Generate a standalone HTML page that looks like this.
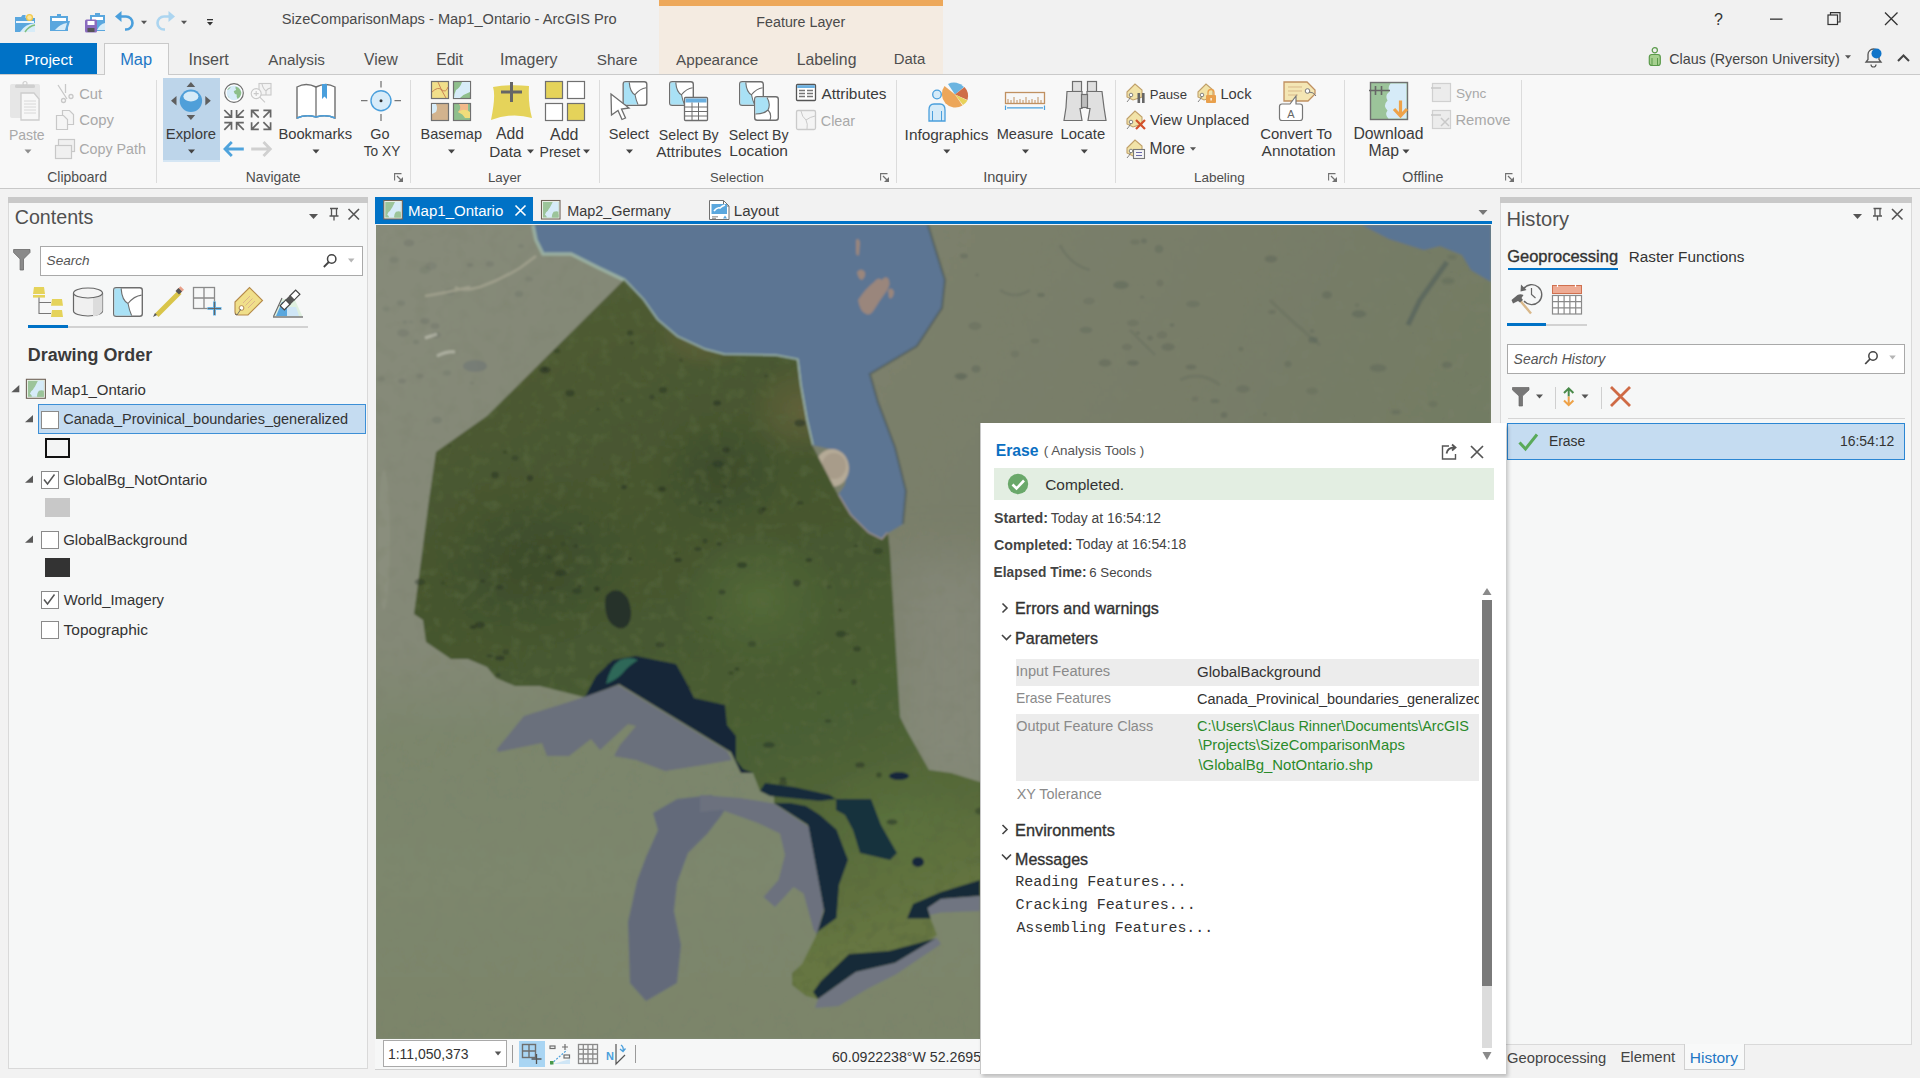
<!DOCTYPE html>
<html><head><meta charset="utf-8">
<style>
*{margin:0;padding:0;box-sizing:border-box}
html,body{width:1920px;height:1078px;overflow:hidden;background:#f2f2f2;font-family:"Liberation Sans",sans-serif;color:#333;position:relative}
.a{position:absolute}
.t{position:absolute;white-space:nowrap;line-height:1}
svg{position:absolute;overflow:visible}
</style></head><body>
<div class="a" style="left:0px;top:0px;width:1920px;height:75px;background:#f1f1f1"></div>
<div class="a" style="left:659px;top:0px;width:284px;height:75px;background:#f4ebe1"></div>
<div class="a" style="left:659px;top:0px;width:284px;height:6px;background:#eda85a"></div>
<div class="t" style="left:281.84px;top:12.41px;font-size:14.63px;color:#4a4a4a;font-family:'Liberation Sans',sans-serif;">SizeComparisonMaps - Map1_Ontario - ArcGIS Pro</div>
<div class="t" style="left:756.36px;top:14.82px;font-size:14.27px;color:#4a4a4a;font-family:'Liberation Sans',sans-serif;">Feature Layer</div>
<div class="a" style="left:0px;top:74px;width:1920px;height:1px;background:#cacaca"></div>
<div class="a" style="left:0px;top:43px;width:97px;height:31px;background:#0072c6"></div>
<div class="a" style="left:104px;top:43px;width:65px;height:32px;background:#f8f8f8;border:1px solid #c9c9c9;border-bottom:none"></div>
<div class="t" style="left:24.26px;top:51.85px;font-size:15.54px;color:#ffffff;font-family:'Liberation Sans',sans-serif;">Project</div>
<div class="t" style="left:120.18px;top:51.08px;font-size:16.44px;color:#1f77c5;font-family:'Liberation Sans',sans-serif;">Map</div>
<div class="t" style="left:188.55px;top:51.34px;font-size:16.13px;color:#4f4f4f;font-family:'Liberation Sans',sans-serif;">Insert</div>
<div class="t" style="left:268.30px;top:52.11px;font-size:15.23px;color:#4f4f4f;font-family:'Liberation Sans',sans-serif;">Analysis</div>
<div class="t" style="left:364.12px;top:51.74px;font-size:15.66px;color:#4f4f4f;font-family:'Liberation Sans',sans-serif;">View</div>
<div class="t" style="left:436.25px;top:51.80px;font-size:15.60px;color:#4f4f4f;font-family:'Liberation Sans',sans-serif;">Edit</div>
<div class="t" style="left:500.07px;top:51.53px;font-size:15.91px;color:#4f4f4f;font-family:'Liberation Sans',sans-serif;">Imagery</div>
<div class="t" style="left:596.81px;top:52.05px;font-size:15.30px;color:#4f4f4f;font-family:'Liberation Sans',sans-serif;">Share</div>
<div class="t" style="left:676.00px;top:52.09px;font-size:15.25px;color:#4f4f4f;font-family:'Liberation Sans',sans-serif;">Appearance</div>
<div class="t" style="left:796.74px;top:51.63px;font-size:15.79px;color:#4f4f4f;font-family:'Liberation Sans',sans-serif;">Labeling</div>
<div class="t" style="left:893.81px;top:52.37px;font-size:14.93px;color:#4f4f4f;font-family:'Liberation Sans',sans-serif;">Data</div>
<div class="t" style="left:1669.28px;top:51.62px;font-size:14.33px;color:#444;font-family:'Liberation Sans',sans-serif;">Claus (Ryerson University)</div>
<div class="a" style="left:0px;top:75px;width:1920px;height:113px;background:#f8f8f8"></div>
<div class="a" style="left:0px;top:188px;width:1920px;height:1px;background:#c8c8c8"></div>
<div class="a" style="left:156.0px;top:80px;width:1px;height:103px;background:#dcdcdc"></div>
<div class="a" style="left:409.8px;top:80px;width:1px;height:103px;background:#dcdcdc"></div>
<div class="a" style="left:598.9px;top:80px;width:1px;height:103px;background:#dcdcdc"></div>
<div class="a" style="left:896.0px;top:80px;width:1px;height:103px;background:#dcdcdc"></div>
<div class="a" style="left:1114.8px;top:80px;width:1px;height:103px;background:#dcdcdc"></div>
<div class="a" style="left:1344.1px;top:80px;width:1px;height:103px;background:#dcdcdc"></div>
<div class="a" style="left:1521.2px;top:80px;width:1px;height:103px;background:#dcdcdc"></div>
<div class="a" style="left:163px;top:78px;width:57px;height:84px;background:#bdd5ea"></div>
<div class="a" style="left:163px;top:160px;width:57px;height:2px;background:#d5e6f4"></div>
<div class="t" style="left:8.88px;top:127.76px;font-size:13.99px;color:#a9a9a9;font-family:'Liberation Sans',sans-serif;">Paste</div>
<div class="t" style="left:79.27px;top:86.58px;font-size:14.67px;color:#a9a9a9;font-family:'Liberation Sans',sans-serif;">Cut</div>
<div class="t" style="left:79.26px;top:113.40px;font-size:14.88px;color:#a9a9a9;font-family:'Liberation Sans',sans-serif;">Copy</div>
<div class="t" style="left:79.29px;top:142.42px;font-size:14.27px;color:#a9a9a9;font-family:'Liberation Sans',sans-serif;">Copy Path</div>
<div class="t" style="left:47.30px;top:170.51px;font-size:13.93px;color:#4d4d4d;font-family:'Liberation Sans',sans-serif;">Clipboard</div>
<div class="t" style="left:165.81px;top:127.03px;font-size:14.85px;color:#3b3b3b;font-family:'Liberation Sans',sans-serif;">Explore</div>
<div class="t" style="left:278.42px;top:127.12px;font-size:14.74px;color:#3b3b3b;font-family:'Liberation Sans',sans-serif;">Bookmarks</div>
<div class="t" style="left:370.28px;top:127.36px;font-size:14.46px;color:#3b3b3b;font-family:'Liberation Sans',sans-serif;">Go</div>
<div class="t" style="left:363.73px;top:144.99px;font-size:13.71px;color:#3b3b3b;font-family:'Liberation Sans',sans-serif;">To XY</div>
<div class="t" style="left:245.69px;top:170.53px;font-size:13.90px;color:#4d4d4d;font-family:'Liberation Sans',sans-serif;">Navigate</div>
<div class="t" style="left:420.53px;top:127.27px;font-size:14.57px;color:#3b3b3b;font-family:'Liberation Sans',sans-serif;">Basemap</div>
<div class="t" style="left:496.00px;top:126.27px;font-size:15.74px;color:#3b3b3b;font-family:'Liberation Sans',sans-serif;">Add</div>
<div class="t" style="left:489.28px;top:143.67px;font-size:15.27px;color:#3b3b3b;font-family:'Liberation Sans',sans-serif;">Data</div>
<div class="t" style="left:550.00px;top:126.03px;font-size:16.03px;color:#3b3b3b;font-family:'Liberation Sans',sans-serif;">Add</div>
<div class="t" style="left:539.58px;top:144.72px;font-size:14.04px;color:#3b3b3b;font-family:'Liberation Sans',sans-serif;">Preset</div>
<div class="t" style="left:487.94px;top:171.04px;font-size:13.31px;color:#4d4d4d;font-family:'Liberation Sans',sans-serif;">Layer</div>
<div class="t" style="left:608.75px;top:127.33px;font-size:14.50px;color:#3b3b3b;font-family:'Liberation Sans',sans-serif;">Select</div>
<div class="t" style="left:658.86px;top:127.61px;font-size:14.16px;color:#3b3b3b;font-family:'Liberation Sans',sans-serif;">Select By</div>
<div class="t" style="left:656.30px;top:143.55px;font-size:15.42px;color:#3b3b3b;font-family:'Liberation Sans',sans-serif;">Attributes</div>
<div class="t" style="left:728.76px;top:127.61px;font-size:14.16px;color:#3b3b3b;font-family:'Liberation Sans',sans-serif;">Select By</div>
<div class="t" style="left:729.26px;top:143.44px;font-size:15.54px;color:#3b3b3b;font-family:'Liberation Sans',sans-serif;">Location</div>
<div class="t" style="left:710.11px;top:171.25px;font-size:13.06px;color:#4d4d4d;font-family:'Liberation Sans',sans-serif;">Selection</div>
<div class="t" style="left:821.50px;top:85.97px;font-size:15.39px;color:#3b3b3b;font-family:'Liberation Sans',sans-serif;">Attributes</div>
<div class="t" style="left:820.78px;top:113.81px;font-size:14.40px;color:#a9a9a9;font-family:'Liberation Sans',sans-serif;">Clear</div>
<div class="t" style="left:904.61px;top:126.56px;font-size:15.40px;color:#3b3b3b;font-family:'Liberation Sans',sans-serif;">Infographics</div>
<div class="t" style="left:996.63px;top:127.26px;font-size:14.58px;color:#3b3b3b;font-family:'Liberation Sans',sans-serif;">Measure</div>
<div class="t" style="left:1060.61px;top:127.03px;font-size:14.85px;color:#3b3b3b;font-family:'Liberation Sans',sans-serif;">Locate</div>
<div class="t" style="left:983.19px;top:169.94px;font-size:14.60px;color:#4d4d4d;font-family:'Liberation Sans',sans-serif;">Inquiry</div>
<div class="t" style="left:1149.65px;top:87.85px;font-size:13.17px;color:#3b3b3b;font-family:'Liberation Sans',sans-serif;">Pause</div>
<div class="t" style="left:1220.42px;top:86.53px;font-size:14.73px;color:#3b3b3b;font-family:'Liberation Sans',sans-serif;">Lock</div>
<div class="t" style="left:1149.93px;top:113.05px;font-size:14.94px;color:#3b3b3b;font-family:'Liberation Sans',sans-serif;">View Unplaced</div>
<div class="t" style="left:1149.45px;top:141.27px;font-size:15.63px;color:#3b3b3b;font-family:'Liberation Sans',sans-serif;">More</div>
<div class="t" style="left:1260.25px;top:126.97px;font-size:14.92px;color:#3b3b3b;font-family:'Liberation Sans',sans-serif;">Convert To</div>
<div class="t" style="left:1261.60px;top:143.48px;font-size:15.50px;color:#3b3b3b;font-family:'Liberation Sans',sans-serif;">Annotation</div>
<div class="t" style="left:1193.92px;top:170.89px;font-size:13.48px;color:#4d4d4d;font-family:'Liberation Sans',sans-serif;">Labeling</div>
<div class="t" style="left:1353.44px;top:126.25px;font-size:15.77px;color:#3b3b3b;font-family:'Liberation Sans',sans-serif;">Download</div>
<div class="t" style="left:1368.44px;top:143.24px;font-size:15.78px;color:#3b3b3b;font-family:'Liberation Sans',sans-serif;">Map</div>
<div class="t" style="left:1402.36px;top:170.21px;font-size:14.28px;color:#4d4d4d;font-family:'Liberation Sans',sans-serif;">Offline</div>
<div class="t" style="left:1455.99px;top:87.45px;font-size:13.64px;color:#a9a9a9;font-family:'Liberation Sans',sans-serif;">Sync</div>
<div class="t" style="left:1455.41px;top:113.14px;font-size:14.83px;color:#a9a9a9;font-family:'Liberation Sans',sans-serif;">Remove</div>
<div class="a" style="left:8px;top:197px;width:360px;height:872px;background:#f6f7f7;border:1px solid #d9d9d9;border-top:none"></div>
<div class="a" style="left:8px;top:197px;width:360px;height:6px;background:#c9c9c9"></div>
<div class="t" style="left:14.72px;top:208.35px;font-size:19.67px;color:#505050;font-family:'Liberation Sans',sans-serif;">Contents</div>
<div class="a" style="left:40px;top:246px;width:323px;height:30px;background:#fff;border:1px solid #a9a9a9"></div>
<div class="t" style="left:46.59px;top:254.49px;font-size:13.59px;color:#555;font-family:'Liberation Sans',sans-serif;font-style:italic;">Search</div>
<div class="a" style="left:28px;top:325px;width:40px;height:3px;background:#0072c6"></div>
<div class="a" style="left:68px;top:326px;width:240px;height:2px;background:#d2d2d2"></div>
<div class="t" style="left:27.84px;top:346.83px;font-size:17.92px;color:#3a3a3a;font-family:'Liberation Sans',sans-serif;font-weight:bold;">Drawing Order</div>
<div class="a" style="left:38px;top:404px;width:328px;height:30px;background:#c5dcf1;border:1px solid #3c8fd6"></div>
<div class="t" style="left:51.10px;top:382.32px;font-size:14.98px;color:#333;font-family:'Liberation Sans',sans-serif;">Map1_Ontario</div>
<div class="t" style="left:63.17px;top:412.11px;font-size:14.52px;color:#333;font-family:'Liberation Sans',sans-serif;">Canada_Provinical_boundaries_generalized</div>
<div class="t" style="left:63.14px;top:472.16px;font-size:15.17px;color:#333;font-family:'Liberation Sans',sans-serif;">GlobalBg_NotOntario</div>
<div class="t" style="left:63.14px;top:532.21px;font-size:15.10px;color:#333;font-family:'Liberation Sans',sans-serif;">GlobalBackground</div>
<div class="t" style="left:63.83px;top:592.76px;font-size:14.82px;color:#333;font-family:'Liberation Sans',sans-serif;">World_Imagery</div>
<div class="t" style="left:63.59px;top:621.89px;font-size:15.49px;color:#333;font-family:'Liberation Sans',sans-serif;">Topographic</div>
<div class="a" style="left:40.5px;top:410.6px;width:18px;height:18px;background:#fff;border:1px solid #8a8a8a"></div>
<div class="a" style="left:40.5px;top:471px;width:18px;height:18px;background:#fff;border:1px solid #8a8a8a"></div>
<div class="a" style="left:40.5px;top:530.8px;width:18px;height:18px;background:#fff;border:1px solid #8a8a8a"></div>
<div class="a" style="left:40.5px;top:591px;width:18px;height:18px;background:#fff;border:1px solid #8a8a8a"></div>
<div class="a" style="left:40.5px;top:621px;width:18px;height:18px;background:#fff;border:1px solid #8a8a8a"></div>
<div class="a" style="left:45px;top:438px;width:25px;height:20px;background:#f3f4f4;border:2.5px solid #111"></div>
<div class="a" style="left:45px;top:498px;width:24.5px;height:19px;background:#c8c8c8"></div>
<div class="a" style="left:45px;top:558px;width:24.5px;height:19px;background:#333"></div>
<div class="a" style="left:375px;top:197px;width:158px;height:25px;background:#0072c6"></div>
<div class="a" style="left:375px;top:221px;width:1117px;height:3px;background:#0072c6"></div>
<div class="t" style="left:408.10px;top:203.28px;font-size:15.03px;color:#ffffff;font-family:'Liberation Sans',sans-serif;">Map1_Ontario</div>
<div class="t" style="left:567.14px;top:203.77px;font-size:14.44px;color:#3a3a3a;font-family:'Liberation Sans',sans-serif;">Map2_Germany</div>
<div class="t" style="left:733.79px;top:203.22px;font-size:15.09px;color:#3a3a3a;font-family:'Liberation Sans',sans-serif;">Layout</div>
<div class="a" id="map" style="left:376px;top:225px;width:1115px;height:814px;background:#838a77;overflow:hidden"><svg width="1115" height="814" viewBox="376 225 1115 814" style="left:0;top:0">
<defs>
<linearGradient id="gon" x1="0" y1="0" x2="0.35" y2="1">
<stop offset="0" stop-color="#5f6240"/><stop offset="0.18" stop-color="#4f5b34"/><stop offset="0.45" stop-color="#45552e"/><stop offset="0.75" stop-color="#4a5f34"/><stop offset="0.9" stop-color="#596b3b"/><stop offset="1" stop-color="#667642"/>
</linearGradient>
<linearGradient id="gbg" x1="0" y1="0" x2="1" y2="0.4">
<stop offset="0" stop-color="#878b7a"/><stop offset="0.3" stop-color="#838876"/><stop offset="0.45" stop-color="#7b806c"/><stop offset="0.7" stop-color="#787d68"/><stop offset="1" stop-color="#717b62"/>
</linearGradient>
<linearGradient id="gsouth" x1="0" y1="0" x2="0" y2="1">
<stop offset="0" stop-color="#7f886f" stop-opacity="0"/><stop offset="0.25" stop-color="#7b866c" stop-opacity="1"/><stop offset="0.6" stop-color="#7d876d" stop-opacity="1"/><stop offset="1" stop-color="#7c856b" stop-opacity="1"/>
</linearGradient>
<radialGradient id="brown" cx="0.5" cy="0.5" r="0.5">
<stop offset="0" stop-color="#7a6a45" stop-opacity="0.5"/><stop offset="1" stop-color="#7a6a45" stop-opacity="0"/>
</radialGradient>
<radialGradient id="dark" cx="0.5" cy="0.5" r="0.5"><stop offset="0" stop-color="#34432a" stop-opacity="0.5"/><stop offset="1" stop-color="#34432a" stop-opacity="0"/></radialGradient>
<radialGradient id="lgreen" cx="0.5" cy="0.5" r="0.5"><stop offset="0" stop-color="#5f7a40" stop-opacity="0.5"/><stop offset="1" stop-color="#5f7a40" stop-opacity="0"/></radialGradient>
<clipPath id="ontclip"><polygon id="ontpoly" points="624,280 643,300 657,320 677,337 705,350 724,355 776,356 797,360 800,385 806,419 812,445 838,495 850,515 868,533 882,540 888,533 890,552 900,717 907,731 929,770 951,773 980,782 1000,782 1000,896 980,896 941,899 927.6,908 930.6,918.6 937,935 895,963 856,972 831,990 818,999 806,996 792,985 792,973 802,964 816,936 824,911 808,825 774,803 774,795 760,791 753,773 741,773 731,752 619,684 588,698 576,695 540,686 515,686 496,678 487,667 468,659 451,659 426,642 423,620 414,614 429,500 436,452 487,416"/></clipPath>
<filter id="tex" x="376" y="225" width="1115" height="814" filterUnits="userSpaceOnUse">
<feTurbulence type="fractalNoise" baseFrequency="0.07" numOctaves="3" seed="7" result="n"/>
<feColorMatrix in="n" type="matrix" values="0 0 0 0 0.2  0 0 0 0 0.22  0 0 0 0 0.15  0 0 0 -0.9 0.45" result="spots"/>
<feComposite in="spots" in2="SourceGraphic" operator="in" result="s2"/>
<feMerge><feMergeNode in="SourceGraphic"/><feMergeNode in="s2"/></feMerge>
</filter>
<filter id="tex2" x="376" y="225" width="1115" height="814" filterUnits="userSpaceOnUse">
<feTurbulence type="fractalNoise" baseFrequency="0.09" numOctaves="3" seed="11" result="n"/>
<feColorMatrix in="n" type="matrix" values="0 0 0 0 0.1  0 0 0 0 0.14  0 0 0 0 0.05  0 0 0 -1.6 0.8" result="spots"/>
<feComposite in="spots" in2="SourceGraphic" operator="in" result="s2"/>
<feColorMatrix in="n" type="matrix" values="0 0 0 0 0.42  0 0 0 0 0.44  0 0 0 0 0.25  0 0 0 0.9 -0.5" result="light"/>
<feComposite in="light" in2="SourceGraphic" operator="in" result="l2"/>
<feMerge><feMergeNode in="SourceGraphic"/><feMergeNode in="s2"/></feMerge>
</filter>
<filter id="bigblur" x="376" y="225" width="1115" height="814" filterUnits="userSpaceOnUse"><feGaussianBlur stdDeviation="25"/></filter>
<filter id="soft" x="376" y="225" width="1115" height="814" filterUnits="userSpaceOnUse"><feGaussianBlur stdDeviation="0.9"/></filter>
</defs>
<g filter="url(#soft)">
<g filter="url(#tex)">
<rect x="376" y="225" width="1115" height="814" fill="url(#gbg)"/>
<rect x="376" y="640" width="620" height="399" fill="url(#gsouth)"/>
<rect x="890" y="560" width="120" height="240" fill="#86897a" opacity="0.85" filter="url(#bigblur)"/>
<ellipse cx="384" cy="540" rx="6" ry="70" fill="#999c8a" opacity="0.3"/>
</g>
<g id="spots"><ellipse cx="1224" cy="415" rx="3.4" ry="3.0" fill="#505a52" opacity="0.32"/><ellipse cx="1159" cy="249" rx="4.1" ry="3.9" fill="#505a52" opacity="0.28"/><ellipse cx="1195" cy="399" rx="3.1" ry="2.5" fill="#505a52" opacity="0.23"/><ellipse cx="1035" cy="341" rx="4.5" ry="2.4" fill="#505a52" opacity="0.22"/><ellipse cx="1121" cy="285" rx="7.9" ry="4.0" fill="#505a52" opacity="0.33"/><ellipse cx="1272" cy="312" rx="3.7" ry="1.9" fill="#505a52" opacity="0.27"/><ellipse cx="976" cy="369" rx="4.6" ry="3.8" fill="#505a52" opacity="0.32"/><ellipse cx="1105" cy="363" rx="6.4" ry="3.7" fill="#505a52" opacity="0.32"/><ellipse cx="1135" cy="242" rx="4.7" ry="2.8" fill="#505a52" opacity="0.22"/><ellipse cx="1142" cy="297" rx="2.2" ry="1.6" fill="#505a52" opacity="0.25"/><ellipse cx="1191" cy="367" rx="5.4" ry="2.5" fill="#505a52" opacity="0.32"/><ellipse cx="1447" cy="365" rx="5.2" ry="3.2" fill="#505a52" opacity="0.32"/><ellipse cx="1127" cy="347" rx="5.2" ry="3.2" fill="#505a52" opacity="0.23"/><ellipse cx="964" cy="256" rx="4.1" ry="2.4" fill="#505a52" opacity="0.32"/><ellipse cx="1327" cy="295" rx="5.1" ry="3.8" fill="#505a52" opacity="0.31"/><ellipse cx="961" cy="376" rx="6.8" ry="3.2" fill="#505a52" opacity="0.34"/><ellipse cx="1312" cy="391" rx="5.8" ry="3.3" fill="#505a52" opacity="0.22"/><ellipse cx="1215" cy="401" rx="4.6" ry="2.1" fill="#505a52" opacity="0.28"/><ellipse cx="1144" cy="241" rx="3.0" ry="2.5" fill="#505a52" opacity="0.30"/><ellipse cx="1433" cy="404" rx="4.4" ry="3.0" fill="#505a52" opacity="0.20"/><ellipse cx="1313" cy="340" rx="4.8" ry="3.3" fill="#505a52" opacity="0.34"/><ellipse cx="1041" cy="295" rx="3.8" ry="2.2" fill="#505a52" opacity="0.34"/><ellipse cx="1015" cy="354" rx="4.3" ry="3.4" fill="#505a52" opacity="0.19"/><ellipse cx="1243" cy="389" rx="6.9" ry="3.7" fill="#505a52" opacity="0.26"/><ellipse cx="1162" cy="335" rx="5.1" ry="3.8" fill="#505a52" opacity="0.23"/><ellipse cx="1265" cy="414" rx="2.0" ry="2.0" fill="#505a52" opacity="0.20"/><ellipse cx="1241" cy="349" rx="2.4" ry="2.0" fill="#505a52" opacity="0.29"/><ellipse cx="1288" cy="364" rx="3.6" ry="3.3" fill="#505a52" opacity="0.27"/><ellipse cx="1396" cy="412" rx="4.6" ry="2.3" fill="#505a52" opacity="0.29"/><ellipse cx="1448" cy="281" rx="6.5" ry="3.2" fill="#505a52" opacity="0.26"/><ellipse cx="977" cy="275" rx="2.1" ry="1.9" fill="#505a52" opacity="0.21"/><ellipse cx="1271" cy="259" rx="6.4" ry="3.4" fill="#505a52" opacity="0.32"/><ellipse cx="1378" cy="368" rx="8.2" ry="3.8" fill="#505a52" opacity="0.29"/><ellipse cx="1470" cy="259" rx="1.9" ry="1.8" fill="#505a52" opacity="0.22"/><ellipse cx="1133" cy="323" rx="6.1" ry="3.2" fill="#505a52" opacity="0.20"/><ellipse cx="1150" cy="338" rx="2.8" ry="2.4" fill="#505a52" opacity="0.29"/><ellipse cx="1133" cy="363" rx="5.9" ry="2.7" fill="#505a52" opacity="0.35"/><ellipse cx="961" cy="377" rx="4.5" ry="3.3" fill="#505a52" opacity="0.20"/><ellipse cx="1193" cy="304" rx="7.0" ry="3.3" fill="#505a52" opacity="0.25"/><ellipse cx="1086" cy="330" rx="6.3" ry="3.2" fill="#505a52" opacity="0.28"/><ellipse cx="1089" cy="301" rx="5.9" ry="3.6" fill="#505a52" opacity="0.19"/><ellipse cx="1160" cy="283" rx="3.4" ry="3.2" fill="#505a52" opacity="0.23"/><ellipse cx="975" cy="326" rx="6.5" ry="4.0" fill="#505a52" opacity="0.25"/><ellipse cx="1452" cy="257" rx="4.7" ry="2.4" fill="#505a52" opacity="0.18"/><ellipse cx="1357" cy="305" rx="2.0" ry="1.5" fill="#505a52" opacity="0.26"/><ellipse cx="1138" cy="333" rx="2.1" ry="1.6" fill="#505a52" opacity="0.35"/><ellipse cx="1172" cy="325" rx="2.3" ry="1.7" fill="#505a52" opacity="0.35"/><ellipse cx="1312" cy="331" rx="2.4" ry="1.6" fill="#505a52" opacity="0.32"/><ellipse cx="1168" cy="347" rx="6.7" ry="3.8" fill="#505a52" opacity="0.29"/><ellipse cx="1359" cy="314" rx="7.3" ry="3.7" fill="#505a52" opacity="0.34"/><ellipse cx="437" cy="420" rx="5.1" ry="3.4" fill="#5f6760" opacity="0.28"/><ellipse cx="402" cy="381" rx="3.8" ry="2.6" fill="#5f6760" opacity="0.29"/><ellipse cx="529" cy="279" rx="3.8" ry="2.6" fill="#5f6760" opacity="0.19"/><ellipse cx="450" cy="292" rx="4.7" ry="3.2" fill="#5f6760" opacity="0.17"/><ellipse cx="405" cy="322" rx="2.5" ry="1.7" fill="#5f6760" opacity="0.21"/><ellipse cx="409" cy="243" rx="5.4" ry="3.6" fill="#5f6760" opacity="0.29"/><ellipse cx="470" cy="265" rx="3.1" ry="2.1" fill="#5f6760" opacity="0.29"/><ellipse cx="521" cy="246" rx="2.9" ry="2.0" fill="#5f6760" opacity="0.22"/><ellipse cx="420" cy="376" rx="3.6" ry="2.4" fill="#5f6760" opacity="0.26"/><ellipse cx="403" cy="333" rx="5.9" ry="3.9" fill="#5f6760" opacity="0.26"/><ellipse cx="394" cy="260" rx="4.7" ry="3.1" fill="#5f6760" opacity="0.20"/><ellipse cx="435" cy="326" rx="4.4" ry="3.0" fill="#5f6760" opacity="0.29"/><ellipse cx="416" cy="342" rx="3.2" ry="2.2" fill="#5f6760" opacity="0.23"/><ellipse cx="490" cy="264" rx="4.1" ry="2.7" fill="#5f6760" opacity="0.26"/><ellipse cx="381" cy="379" rx="3.8" ry="2.5" fill="#5f6760" opacity="0.23"/><ellipse cx="472" cy="383" rx="2.5" ry="1.6" fill="#5f6760" opacity="0.23"/><ellipse cx="386" cy="309" rx="3.5" ry="2.4" fill="#5f6760" opacity="0.16"/><ellipse cx="425" cy="321" rx="4.7" ry="3.1" fill="#5f6760" opacity="0.29"/><ellipse cx="436" cy="335" rx="4.9" ry="3.3" fill="#5f6760" opacity="0.29"/><ellipse cx="425" cy="270" rx="5.7" ry="3.8" fill="#5f6760" opacity="0.16"/><ellipse cx="447" cy="373" rx="4.2" ry="2.8" fill="#5f6760" opacity="0.21"/><ellipse cx="519" cy="294" rx="4.3" ry="2.9" fill="#5f6760" opacity="0.28"/><ellipse cx="401" cy="303" rx="4.1" ry="2.7" fill="#5f6760" opacity="0.23"/><ellipse cx="411" cy="322" rx="2.5" ry="1.6" fill="#5f6760" opacity="0.16"/><ellipse cx="431" cy="266" rx="5.9" ry="3.9" fill="#5f6760" opacity="0.19"/><path d="M1130,330 q10,10 25,25 M1270,300 q20,20 50,45 M1180,380 q20,-10 40,5 M1000,290 q15,10 30,0 M1060,245 q10,20 30,25" stroke="#59625a" stroke-width="3" fill="none" opacity="0.27"/></g>
<path d="M536,256 Q528,262 520,268 Q500,280 480,287 Q462,292 455,287 M470,287 Q445,293 425,296" stroke="#a9a894" stroke-width="2.5" fill="none" opacity="0.7"/><path d="M425,338 l12,-4 M437,356 q10,-5 18,-4" stroke="#c9c9bd" stroke-width="3" opacity="0.6" fill="none"/><ellipse cx="475" cy="366" rx="12" ry="6" fill="#5f6872" opacity="0.35"/>
<!-- Labrador sea top right -->
<polygon points="1362,225 1389,239 1424,250 1440,246 1462,255 1471,270 1491,282 1491,225" fill="#5a7493"/>
<path d="M1447,262 L1420,300 L1408,325" stroke="#3f4f55" stroke-width="5" fill="none" opacity="0.4"/>
<!-- Hudson & James Bay -->
<polygon points="533,225 536,240 543,254 571,254 599,268 624,280 643,300 657,320 677,337 705,350 724,355 776,356 797,360 800,385 806,419 812,445 835,450 848,465 845,485 838,495 850,515 868,533 882,540 888,533 903,524 906,491 895,447 878,402 870,374 917,346 942,308 945,280 928,225" fill="#5b7593"/>
<polyline points="533,225 536,240 543,254 571,254 599,268 624,280 643,300 657,320 677,337 705,350 724,355 776,356 797,360 800,385 806,419 812,445" fill="none" stroke="#9fb6a6" stroke-width="3.5" opacity="0.85"/>
<polyline points="928,225 945,280 942,308 917,346 870,374 878,402 895,447 906,491 903,524" fill="none" stroke="#4a5650" stroke-width="2.5" opacity="0.55"/>
<polyline points="797,360 800,385 806,419 812,445" fill="none" stroke="#9fb6a6" stroke-width="3" opacity="0.7"/><polyline points="838,495 850,515 868,533 882,540 888,533" fill="none" stroke="#b59a8a" stroke-width="3" opacity="0.7"/><ellipse cx="832" cy="468" rx="17" ry="19" fill="#b5aa97"/><ellipse cx="834" cy="466" rx="12" ry="13" fill="#a89c8a"/>
<path d="M856,240 q3,-3 4,3 l-1,12 q-3,2 -3,-4z M857,272 q4,-5 8,0 q1,5 -3,8 q-4,-1 -5,-8z M858,300 q8,-12 16,-18 q4,-6 8,-2 q2,-4 6,-2 q4,6 -2,14 q-6,8 -12,18 q-4,6 -8,4 q-6,-2 -8,-14z M888,290 q4,-4 6,2 q-1,8 -5,6z" fill="#a68a78" opacity="0.85"/>
<!-- Ontario -->
<g filter="url(#tex2)" clip-path="url(#ontclip)">
<rect x="376" y="225" width="700" height="814" fill="url(#gon)"/>
<ellipse cx="800" cy="410" rx="55" ry="50" fill="url(#brown)"/>
<ellipse cx="705" cy="335" rx="50" ry="35" fill="url(#brown)"/>
<ellipse cx="530" cy="560" rx="110" ry="90" fill="url(#dark)"/>
<ellipse cx="720" cy="470" rx="70" ry="60" fill="url(#dark)"/>
<ellipse cx="900" cy="830" rx="90" ry="70" fill="url(#lgreen)"/>
<ellipse cx="760" cy="600" rx="80" ry="70" fill="url(#lgreen)"/>
</g>
<g id="ontspots"><ellipse cx="769" cy="745" rx="5.9" ry="3.0" fill="#1f2a22" opacity="0.43"/><ellipse cx="483" cy="581" rx="2.7" ry="1.8" fill="#1f2a22" opacity="0.39"/><ellipse cx="766" cy="376" rx="2.3" ry="1.2" fill="#1f2a22" opacity="0.31"/><ellipse cx="800" cy="423" rx="5.7" ry="3.4" fill="#1f2a22" opacity="0.47"/><ellipse cx="622" cy="400" rx="1.6" ry="1.5" fill="#1f2a22" opacity="0.34"/><ellipse cx="800" cy="503" rx="3.5" ry="1.9" fill="#1f2a22" opacity="0.37"/><ellipse cx="597" cy="589" rx="3.0" ry="2.8" fill="#1f2a22" opacity="0.47"/><ellipse cx="843" cy="858" rx="4.5" ry="3.4" fill="#1f2a22" opacity="0.34"/><ellipse cx="866" cy="816" rx="2.5" ry="1.3" fill="#1f2a22" opacity="0.29"/><ellipse cx="611" cy="666" rx="4.4" ry="3.3" fill="#1f2a22" opacity="0.46"/><ellipse cx="725" cy="487" rx="2.3" ry="1.9" fill="#1f2a22" opacity="0.29"/><ellipse cx="719" cy="544" rx="2.8" ry="1.7" fill="#1f2a22" opacity="0.44"/><ellipse cx="675" cy="553" rx="2.5" ry="1.3" fill="#1f2a22" opacity="0.28"/><ellipse cx="663" cy="390" rx="4.1" ry="3.1" fill="#1f2a22" opacity="0.37"/><ellipse cx="980" cy="811" rx="5.0" ry="3.4" fill="#1f2a22" opacity="0.37"/><ellipse cx="829" cy="587" rx="2.6" ry="1.9" fill="#1f2a22" opacity="0.30"/><ellipse cx="700" cy="503" rx="1.8" ry="1.4" fill="#1f2a22" opacity="0.43"/><ellipse cx="860" cy="765" rx="4.7" ry="2.8" fill="#1f2a22" opacity="0.43"/><ellipse cx="577" cy="591" rx="5.0" ry="3.0" fill="#1f2a22" opacity="0.33"/><ellipse cx="726" cy="450" rx="4.0" ry="2.7" fill="#1f2a22" opacity="0.44"/><ellipse cx="783" cy="779" rx="3.3" ry="2.0" fill="#1f2a22" opacity="0.43"/><ellipse cx="892" cy="822" rx="5.5" ry="2.8" fill="#1f2a22" opacity="0.47"/><ellipse cx="710" cy="618" rx="2.9" ry="1.6" fill="#1f2a22" opacity="0.47"/><ellipse cx="687" cy="715" rx="4.9" ry="2.9" fill="#1f2a22" opacity="0.31"/><ellipse cx="857" cy="649" rx="3.9" ry="2.7" fill="#1f2a22" opacity="0.40"/><ellipse cx="854" cy="682" rx="2.9" ry="2.9" fill="#1f2a22" opacity="0.31"/><ellipse cx="667" cy="690" rx="2.9" ry="1.7" fill="#1f2a22" opacity="0.40"/><ellipse cx="443" cy="583" rx="1.8" ry="1.7" fill="#1f2a22" opacity="0.30"/><ellipse cx="598" cy="409" rx="1.7" ry="1.6" fill="#1f2a22" opacity="0.37"/><ellipse cx="633" cy="667" rx="3.2" ry="2.6" fill="#1f2a22" opacity="0.46"/><ellipse cx="576" cy="546" rx="2.7" ry="1.5" fill="#1f2a22" opacity="0.35"/><ellipse cx="473" cy="627" rx="3.1" ry="2.0" fill="#1f2a22" opacity="0.47"/><ellipse cx="878" cy="551" rx="5.0" ry="3.1" fill="#1f2a22" opacity="0.35"/><ellipse cx="500" cy="658" rx="4.9" ry="2.5" fill="#1f2a22" opacity="0.47"/><ellipse cx="761" cy="511" rx="3.3" ry="3.3" fill="#1f2a22" opacity="0.29"/><ellipse cx="737" cy="669" rx="2.5" ry="1.5" fill="#1f2a22" opacity="0.46"/><ellipse cx="630" cy="559" rx="2.2" ry="1.7" fill="#1f2a22" opacity="0.47"/><ellipse cx="698" cy="549" rx="3.8" ry="1.9" fill="#1f2a22" opacity="0.37"/><ellipse cx="580" cy="586" rx="2.4" ry="1.5" fill="#1f2a22" opacity="0.37"/><ellipse cx="718" cy="464" rx="6.0" ry="3.4" fill="#1f2a22" opacity="0.32"/><ellipse cx="570" cy="393" rx="4.5" ry="3.5" fill="#1f2a22" opacity="0.40"/><ellipse cx="686" cy="687" rx="4.5" ry="2.6" fill="#1f2a22" opacity="0.29"/><ellipse cx="719" cy="502" rx="2.9" ry="1.9" fill="#1f2a22" opacity="0.37"/><ellipse cx="561" cy="573" rx="6.2" ry="3.3" fill="#1f2a22" opacity="0.38"/><ellipse cx="660" cy="645" rx="4.6" ry="2.8" fill="#1f2a22" opacity="0.37"/><ellipse cx="530" cy="478" rx="3.3" ry="3.1" fill="#1f2a22" opacity="0.44"/><ellipse cx="809" cy="560" rx="3.3" ry="1.9" fill="#1f2a22" opacity="0.46"/><ellipse cx="500" cy="587" rx="3.7" ry="2.5" fill="#1f2a22" opacity="0.34"/><ellipse cx="506" cy="652" rx="3.3" ry="3.1" fill="#1f2a22" opacity="0.32"/><ellipse cx="879" cy="775" rx="2.8" ry="2.7" fill="#1f2a22" opacity="0.42"/><ellipse cx="968" cy="899" rx="3.0" ry="2.8" fill="#1f2a22" opacity="0.44"/><ellipse cx="495" cy="475" rx="3.8" ry="3.3" fill="#1f2a22" opacity="0.40"/><ellipse cx="652" cy="397" rx="2.7" ry="2.6" fill="#1f2a22" opacity="0.29"/><ellipse cx="632" cy="343" rx="2.1" ry="1.3" fill="#1f2a22" opacity="0.43"/><ellipse cx="662" cy="489" rx="3.8" ry="2.6" fill="#1f2a22" opacity="0.47"/><ellipse cx="630" cy="333" rx="3.2" ry="2.8" fill="#1f2a22" opacity="0.40"/><ellipse cx="731" cy="673" rx="2.8" ry="1.8" fill="#1f2a22" opacity="0.32"/><ellipse cx="840" cy="610" rx="1.9" ry="1.5" fill="#1f2a22" opacity="0.35"/><ellipse cx="819" cy="693" rx="2.3" ry="1.4" fill="#1f2a22" opacity="0.29"/><ellipse cx="490" cy="656" rx="3.3" ry="1.7" fill="#1f2a22" opacity="0.37"/><ellipse cx="545" cy="370" rx="5.7" ry="3.4" fill="#1f2a22" opacity="0.44"/><ellipse cx="498" cy="675" rx="2.5" ry="2.0" fill="#1f2a22" opacity="0.34"/><ellipse cx="764" cy="509" rx="2.4" ry="2.1" fill="#1f2a22" opacity="0.44"/><ellipse cx="783" cy="783" rx="4.1" ry="2.2" fill="#1f2a22" opacity="0.38"/><ellipse cx="752" cy="644" rx="4.1" ry="2.9" fill="#1f2a22" opacity="0.29"/><ellipse cx="420" cy="582" rx="5.3" ry="3.2" fill="#1f2a22" opacity="0.36"/><ellipse cx="681" cy="360" rx="1.8" ry="1.6" fill="#1f2a22" opacity="0.35"/><ellipse cx="505" cy="452" rx="2.1" ry="1.8" fill="#1f2a22" opacity="0.33"/><ellipse cx="552" cy="589" rx="2.5" ry="1.3" fill="#1f2a22" opacity="0.35"/><ellipse cx="797" cy="583" rx="3.8" ry="3.4" fill="#1f2a22" opacity="0.41"/><ellipse cx="624" cy="487" rx="2.9" ry="2.3" fill="#1f2a22" opacity="0.43"/><ellipse cx="856" cy="546" rx="2.0" ry="1.3" fill="#1f2a22" opacity="0.48"/><ellipse cx="711" cy="510" rx="1.5" ry="1.4" fill="#1f2a22" opacity="0.46"/><ellipse cx="450" cy="446" rx="1.8" ry="1.3" fill="#1f2a22" opacity="0.28"/><ellipse cx="563" cy="544" rx="2.0" ry="1.9" fill="#1f2a22" opacity="0.28"/><ellipse cx="705" cy="541" rx="2.6" ry="2.4" fill="#1f2a22" opacity="0.34"/><ellipse cx="480" cy="625" rx="5.3" ry="3.3" fill="#1f2a22" opacity="0.45"/><ellipse cx="722" cy="592" rx="3.5" ry="2.5" fill="#1f2a22" opacity="0.40"/><ellipse cx="826" cy="848" rx="2.8" ry="1.9" fill="#1f2a22" opacity="0.44"/><ellipse cx="545" cy="369" rx="2.1" ry="1.9" fill="#1f2a22" opacity="0.43"/><ellipse cx="557" cy="351" rx="3.4" ry="2.2" fill="#1f2a22" opacity="0.32"/><ellipse cx="580" cy="524" rx="2.0" ry="1.4" fill="#1f2a22" opacity="0.34"/><ellipse cx="841" cy="634" rx="5.4" ry="3.3" fill="#1f2a22" opacity="0.43"/><ellipse cx="742" cy="565" rx="5.1" ry="3.1" fill="#1f2a22" opacity="0.47"/><ellipse cx="828" cy="721" rx="3.3" ry="1.8" fill="#1f2a22" opacity="0.35"/><ellipse cx="515" cy="458" rx="3.5" ry="2.8" fill="#1f2a22" opacity="0.28"/><ellipse cx="848" cy="634" rx="1.3" ry="1.3" fill="#1f2a22" opacity="0.30"/><ellipse cx="549" cy="557" rx="2.7" ry="2.0" fill="#1f2a22" opacity="0.27"/><ellipse cx="717" cy="403" rx="4.1" ry="2.8" fill="#1f2a22" opacity="0.47"/><ellipse cx="678" cy="560" rx="3.9" ry="2.2" fill="#1f2a22" opacity="0.47"/></g>
<!-- Ontario lakes (dark) -->
<polygon points="585,697 596,676 613,660 636,656 676,664 685,680 694,698 725,705 727,725 736,736 736,760 743,769 753,773 741,773 731,752 619,684" fill="#152638"/>
<path d="M606,684 q4,-18 14,-24 q10,-4 18,0 q-10,6 -16,14 q-6,6 -16,10z" fill="#3a8a6a" opacity="0.65"/>
<polygon points="765,783 794,787 830,795 836,799 820,801 790,798 770,796 760,791" fill="#152a3a"/>
<polygon points="774,803 808,825 824,911 816,936 818,931.6 836.5,918 839,885 848,860 836.5,829.6 820,815 806,806 790,803" fill="#152a3a"/>
<polygon points="836,799 871,799 881,825 897,853 890,860 860,853 853,830 845,815 836,810" fill="#17303c"/>
<polygon points="818,999 856,972 895,963 936.6,938 933.6,939 889,951 849,954 821,981 813,992" fill="#182c38"/>
<polygon points="907,918.6 913,904 941,892 980,880 980,896 941,899 927.6,908 930.6,918.6" fill="#182c38"/>
<ellipse cx="918" cy="862" rx="6" ry="5" fill="#18283a"/>
<ellipse cx="899" cy="776" rx="10" ry="4" fill="#18283a"/>
<path d="M606,596 q6,-8 14,-5 q8,4 10,14 q3,12 -2,20 q-6,6 -12,2 q-8,-4 -10,-14 q-2,-10 0,-17z" fill="#222e2a" opacity="0.9"/>
<!-- US lakes (overlaid) -->
<polygon points="497,749 524,716 569,702 587,696 618,685 727,751 732,760 703,765 665,771 636,760 614,756 620,745 636,726 628,724 600,750 591,739 569,756 547,756 542,743 498,752" fill="#6a6f7c"/>

<polygon points="653,813 677,799 711,795 730,802 721,816 707,834 688,853 677,883 674,911 681,945 677,983 646,1001 630,983 628,922 637,881 646,857 658,830" fill="#636a7a"/>
<polygon points="700,795 740,798 773.5,803.4 808.6,826.8 823.6,908.6 817,933.7 813.6,930 803.6,893.6 793.5,887 775,907 763.5,897 778.5,880 785,855 780,833.5 758,823 721.7,810 700,812" fill="#6c717e"/>
<polygon points="818,999 856,972 895,963 936.6,938 941,944 896.5,974 867,989 838.6,1006 815,1008" fill="#6f7581"/>
<polygon points="927.6,908 941,899 980,896 980,911 941,912.6 930,915" fill="#6f7581"/>
</g>
</svg></div>
<div class="a" style="left:375px;top:1039px;width:1117px;height:31px;background:#f6f7f7;border-bottom:1.5px solid #d0d0d0"></div>
<div class="a" style="left:382.5px;top:1040.3px;width:124.2px;height:27.2px;background:#fff;border:1px solid #a9a9a9"></div>
<div class="t" style="left:387.95px;top:1046.86px;font-size:13.98px;color:#333;font-family:'Liberation Sans',sans-serif;">1:11,050,373</div>
<div class="a" style="left:512px;top:1045px;width:1px;height:18px;background:#9a9a9a"></div>
<div class="a" style="left:518.8px;top:1041px;width:26px;height:25.7px;background:#a9d5f3"></div>
<div class="a" style="left:635.3px;top:1045px;width:1px;height:18px;background:#9a9a9a"></div>
<div class="t" style="left:831.99px;top:1049.50px;font-size:14.18px;color:#333;font-family:'Liberation Sans',sans-serif;">60.0922238°W 52.269541°N</div>
<div class="a" style="left:1500px;top:197px;width:412px;height:848px;background:#f6f7f7;border:1px solid #d9d9d9;border-top:none"></div>
<div class="a" style="left:1500px;top:197px;width:412px;height:6px;background:#c9c9c9"></div>
<div class="t" style="left:1506.39px;top:208.96px;font-size:20.13px;color:#505050;font-family:'Liberation Sans',sans-serif;">History</div>
<div class="t" style="left:1507.18px;top:248.04px;font-size:16.49px;color:#333;font-family:'Liberation Sans',sans-serif;-webkit-text-stroke:0.35px #333;">Geoprocessing</div>
<div class="a" style="left:1508px;top:268px;width:110px;height:2px;background:#0072c6"></div>
<div class="t" style="left:1628.78px;top:249.04px;font-size:15.31px;color:#333;font-family:'Liberation Sans',sans-serif;">Raster Functions</div>
<div class="a" style="left:1507px;top:323px;width:39px;height:3px;background:#0072c6"></div>
<div class="a" style="left:1546px;top:324px;width:41px;height:2px;background:#d2d2d2"></div>
<div class="a" style="left:1507px;top:344px;width:398px;height:30px;background:#fff;border:1px solid #a9a9a9"></div>
<div class="t" style="left:1513.58px;top:351.66px;font-size:13.98px;color:#555;font-family:'Liberation Sans',sans-serif;font-style:italic;">Search History</div>
<div class="a" style="left:1555px;top:387px;width:1px;height:22px;background:#cfcfcf"></div>
<div class="a" style="left:1601px;top:387px;width:1px;height:22px;background:#cfcfcf"></div>
<div class="a" style="left:1508px;top:418px;width:397px;height:1px;background:#d5d5d5"></div>
<div class="a" style="left:1507px;top:423px;width:398px;height:37px;background:#c5dcf1;border:1.5px solid #2b86d3"></div>
<div class="t" style="left:1548.89px;top:435.21px;font-size:13.92px;color:#333;font-family:'Liberation Sans',sans-serif;">Erase</div>
<div class="t" style="left:1839.95px;top:435.17px;font-size:13.97px;color:#333;font-family:'Liberation Sans',sans-serif;">16:54:12</div>
<div class="a" style="left:1684.4px;top:1044px;width:61px;height:26px;background:#f8f9f9;border:1px solid #d0d0d0;border-top:none"></div>
<div class="t" style="left:1507.06px;top:1050.51px;font-size:14.75px;color:#444;font-family:'Liberation Sans',sans-serif;">Geoprocessing</div>
<div class="t" style="left:1620.41px;top:1050.37px;font-size:14.92px;color:#444;font-family:'Liberation Sans',sans-serif;">Element</div>
<div class="t" style="left:1689.76px;top:1049.87px;font-size:15.51px;color:#1f77c5;font-family:'Liberation Sans',sans-serif;">History</div>
<div class="a" style="left:980px;top:423px;width:526px;height:651px;z-index:5;background:#fff;border-left:1px solid #c8c8c8;box-shadow:2px 3px 4px rgba(0,0,0,0.22)"></div>
<div class="t" style="left:995.68px;top:443.28px;font-size:15.73px;color:#0a6fc2;font-family:'Liberation Sans',sans-serif;font-weight:bold;z-index:6;">Erase</div>
<div class="t" style="left:1043.69px;top:443.61px;font-size:13.45px;color:#555;font-family:'Liberation Sans',sans-serif;z-index:6;">( Analysis Tools )</div>
<div class="a" style="left:994px;top:468px;width:500px;height:32px;z-index:6;background:#e3eee2"></div>
<div class="t" style="left:1045.23px;top:477.24px;font-size:15.43px;color:#333;font-family:'Liberation Sans',sans-serif;z-index:6;">Completed.</div>
<div class="t" style="left:994.07px;top:511.44px;font-size:14.25px;color:#444;font-family:'Liberation Sans',sans-serif;font-weight:bold;z-index:6;">Started:</div>
<div class="t" style="left:1050.72px;top:511.75px;font-size:13.88px;color:#444;font-family:'Liberation Sans',sans-serif;z-index:6;">Today at 16:54:12</div>
<div class="t" style="left:993.93px;top:538.12px;font-size:14.27px;color:#444;font-family:'Liberation Sans',sans-serif;font-weight:bold;z-index:6;">Completed:</div>
<div class="t" style="left:1075.72px;top:538.43px;font-size:13.90px;color:#444;font-family:'Liberation Sans',sans-serif;z-index:6;">Today at 16:54:18</div>
<div class="t" style="left:993.61px;top:565.85px;font-size:13.76px;color:#444;font-family:'Liberation Sans',sans-serif;font-weight:bold;z-index:6;">Elapsed Time:</div>
<div class="t" style="left:1089.34px;top:566.30px;font-size:13.23px;color:#444;font-family:'Liberation Sans',sans-serif;z-index:6;">6 Seconds</div>
<div class="t" style="left:1015.11px;top:600.39px;font-size:16.07px;color:#333;font-family:'Liberation Sans',sans-serif;z-index:6;-webkit-text-stroke:0.35px #333;">Errors and warnings</div>
<div class="t" style="left:1015.12px;top:630.04px;font-size:16.02px;color:#333;font-family:'Liberation Sans',sans-serif;z-index:6;-webkit-text-stroke:0.35px #333;">Parameters</div>
<div class="a" style="left:1016px;top:659px;width:463px;height:27px;z-index:6;background:#ececec"></div>
<div class="a" style="left:1016px;top:714px;width:463px;height:67px;z-index:6;background:#ececec"></div>
<div class="t" style="left:1015.68px;top:664.08px;font-size:14.67px;color:#8a8a8a;font-family:'Liberation Sans',sans-serif;z-index:6;">Input Features</div>
<div class="t" style="left:1197.05px;top:663.75px;font-size:15.07px;color:#333;font-family:'Liberation Sans',sans-serif;z-index:6;">GlobalBackground</div>
<div class="t" style="left:1015.89px;top:692.21px;font-size:13.93px;color:#8a8a8a;font-family:'Liberation Sans',sans-serif;z-index:6;">Erase Features</div>
<div class="a" style="left:1195px;top:690px;width:284px;height:22px;overflow:hidden;z-index:7">
<div class="t" style="left:2.07px;top:1.71px;font-size:14.52px;color:#333;font-family:'Liberation Sans',sans-serif;">Canada_Provinical_boundaries_generalized</div>
</div>
<div class="t" style="left:1016.35px;top:719.40px;font-size:14.41px;color:#8a8a8a;font-family:'Liberation Sans',sans-serif;z-index:6;">Output Feature Class</div>
<div class="t" style="left:1197.08px;top:719.34px;font-size:14.48px;color:#2a8a2a;font-family:'Liberation Sans',sans-serif;z-index:6;">C:\Users\Claus Rinner\Documents\ArcGIS</div>
<div class="t" style="left:1198.40px;top:738.46px;font-size:14.81px;color:#2a8a2a;font-family:'Liberation Sans',sans-serif;z-index:6;">\Projects\SizeComparisonMaps</div>
<div class="t" style="left:1198.40px;top:758.35px;font-size:14.94px;color:#2a8a2a;font-family:'Liberation Sans',sans-serif;z-index:6;">\GlobalBg_NotOntario.shp</div>
<div class="t" style="left:1016.64px;top:786.78px;font-size:14.43px;color:#8a8a8a;font-family:'Liberation Sans',sans-serif;z-index:6;">XY Tolerance</div>
<div class="t" style="left:1015.09px;top:821.79px;font-size:16.32px;color:#333;font-family:'Liberation Sans',sans-serif;z-index:6;-webkit-text-stroke:0.35px #333;">Environments</div>
<div class="t" style="left:1015.12px;top:851.04px;font-size:16.02px;color:#333;font-family:'Liberation Sans',sans-serif;z-index:6;-webkit-text-stroke:0.35px #333;">Messages</div>
<div class="t" style="left:1015.20px;top:874.87px;font-size:15.03px;color:#333;font-family:'Liberation Mono',monospace;z-index:6;">Reading Features...</div>
<div class="t" style="left:1015.57px;top:898.28px;font-size:15.03px;color:#333;font-family:'Liberation Mono',monospace;z-index:6;">Cracking Features...</div>
<div class="t" style="left:1016.40px;top:921.38px;font-size:14.91px;color:#333;font-family:'Liberation Mono',monospace;z-index:6;">Assembling Features...</div>
<div class="a" style="left:1482.4px;top:600px;width:9.3px;height:386px;z-index:6;background:#7a7a7a"></div>
<div class="a" style="left:1482.4px;top:986px;width:9.3px;height:62px;z-index:6;background:#dcdcdc"></div>
<svg width="1920" height="1078" viewBox="0 0 1920 1078" style="left:0;top:0;z-index:10"><g transform="translate(15,13)"><path d="M0,4 h6 l1.5,-2 h3 v3 h9.5 v14 h-20z" fill="#5aa7de"/><rect x="1" y="8" width="18" height="2" fill="#fff" opacity="0.9"/><path d="M5,19 Q10,11 20,10 v9z" fill="#d7ecf8"/><path d="M10,19 Q14,13 20,12" stroke="#7fbf7f" stroke-width="1.5" fill="none"/><circle cx="14.5" cy="4.5" r="3.6" fill="#f2c94c"/><circle cx="14.5" cy="4.5" r="2.2" fill="#fbe6a0"/></g><g transform="translate(50,14)"><path d="M0,2 h7 v-2 h4 v2 h7 v15 h-18z" fill="#5aa7de"/><rect x="2" y="4" width="14" height="3" fill="#fff"/><path d="M0,17 L3,7 h17 l-3,10z" fill="#5aa7de"/><path d="M5,16 Q10,10 17,9 l-2,7z" fill="#d7ecf8"/></g><g transform="translate(85,13)"><path d="M5,2 h5 v-2 h5 v2 h5 v16 h-15z" fill="#5aa7de"/><rect x="7" y="4" width="11" height="3" fill="#fff"/><path d="M12,17 Q15,11 20,10 v7z" fill="#d7ecf8"/><rect x="0" y="6.5" width="12" height="13" rx="1.5" fill="#8b6cbf"/><rect x="2.5" y="8" width="7" height="4" fill="#fff"/><rect x="2.5" y="15" width="7" height="4" fill="#555"/></g><path d="M117,16.5 H126 A6.5,6.5 0 0 1 126,29.5 H125" fill="none" stroke="#4a9fdc" stroke-width="2.6"/><polygon points="115,16.5 121.5,11 121.5,22" fill="#4a9fdc"/><polygon points="141.0,20.75 147.0,20.75 144,24.25" fill="#555"/><path d="M173,16.5 H164 A6.5,6.5 0 0 0 164,29.5 H165" fill="none" stroke="#acd5f0" stroke-width="2.6"/><polygon points="175,16.5 168.5,11 168.5,22" fill="#acd5f0"/><polygon points="181.0,20.75 187.0,20.75 184,24.25" fill="#555"/><rect x="207" y="19" width="6" height="1.3" fill="#333"/><polygon points="207,22 213,22 210,25.5" fill="#333"/><text x="1718.5" y="25" font-size="16" text-anchor="middle" fill="#333" font-family="Liberation Sans">?</text><rect x="1770" y="18.5" width="12.5" height="1.3" fill="#333"/><rect x="1828" y="15" width="9.5" height="9.5" fill="none" stroke="#333" stroke-width="1.2"/><path d="M1830.5,15 V12.6 H1840 V22 H1837.5" fill="none" stroke="#333" stroke-width="1.2"/><path d="M1885,12.5 L1897.5,25 M1897.5,12.5 L1885,25" stroke="#333" stroke-width="1.3"/><g transform="translate(1648.5,47)"><circle cx="6.3" cy="3.3" r="2.6" fill="none" stroke="#5a9a4a" stroke-width="1.2"/><rect x="0.8" y="7.5" width="11" height="11" rx="2.5" fill="#a6d08f" stroke="#5a9a4a" stroke-width="1.2"/><path d="M3.5,11 v7.5 M9,11 v7.5" stroke="#5a9a4a" stroke-width="1"/></g><polygon points="1845.0,55.25 1851.0,55.25 1848,58.75" fill="#555"/><path d="M1866,62 h15 l-2,-2.5 v-5 a5.5,5.5 0 0 0 -11,0 v5z" fill="none" stroke="#555" stroke-width="1.3"/><path d="M1871,64.5 a2.5,2.5 0 0 0 5,0" fill="none" stroke="#555" stroke-width="1.2"/><circle cx="1876.5" cy="53.5" r="5" fill="#0f74c9"/><path d="M1898,61 L1903.5,55.5 L1909,61" fill="none" stroke="#444" stroke-width="2"/><g transform="translate(10,81)" opacity="1"><rect x="0" y="3" width="30" height="34" rx="2" fill="#e6e6e6"/><rect x="5" y="3.5" width="20" height="3.5" rx="1.5" fill="#cfcfcf"/><circle cx="15" cy="2.5" r="2" fill="none" stroke="#cfcfcf" stroke-width="1.2"/><path d="M11,12 h13 l5,6 v21 h-18z" fill="#f7f7f7" stroke="#cdcdcd" stroke-width="1.3"/><path d="M14,20 h12 M14,23 h12 M14,26 h12 M14,29 h12 M14,32 h12" stroke="#d8d8d8" stroke-width="1"/></g><polygon points="24.5,149.5 31.5,149.5 28,153.5" fill="#8d8d8d"/><g stroke="#c8c8c8" fill="none" stroke-width="1.3"><path d="M58,85 L67,99 M65.5,84 V93"/><circle cx="63.5" cy="100.5" r="2"/><circle cx="71" cy="96.5" r="2"/></g><g fill="#f5f5f5" stroke="#c8c8c8" stroke-width="1.2"><path d="M62.5,110.5 h7 l4,4 v10 h-11z"/><path d="M56.5,115.5 h7 l4,4 v10 h-11z"/></g><g fill="#f0f0f0" stroke="#c8c8c8" stroke-width="1.2"><rect x="58.5" y="139.5" width="16" height="12"/><rect x="55.5" y="145.5" width="16" height="13"/></g><g fill="#5e5e5e"><polygon points="190.9,82 186.6,87 195.2,87"/><polygon points="190.9,120 186.6,115 195.2,115"/><polygon points="171,100.7 176.5,96 176.5,105.4"/><polygon points="210.8,100.7 205.3,96 205.3,105.4"/></g><circle cx="190.9" cy="100.8" r="11.2" fill="#4f9fd9"/><ellipse cx="190.9" cy="96.5" rx="7.5" ry="5" fill="#d6ebf8"/><polygon points="188.0,149.5 195.0,149.5 191.5,153.5" fill="#444"/><circle cx="234" cy="93" r="9.3" fill="#fff" stroke="#6e6e6e" stroke-width="1.2"/><circle cx="234" cy="92.8" r="7.4" fill="#d6ebf8"/><path d="M235.5,86.5 q3,0.5 4.5,3 q1.5,2 1.2,4.5 q-1,3.5 -3.5,5 q-1.5,-2.5 -1,-4.5 q-2.5,-0.5 -3,-3 q1,-1.5 2.5,-1.5 q-1,-2 -0.7,-3.5z M227,90 q1.5,-2.5 4,-3.5 q-1,2 -2.5,3 z M227.5,94 q0.5,2.5 2,4 q-1.5,-1 -2,-4z" fill="#8dbf8a"/><g stroke="#c9c9c9" fill="none" stroke-width="1.1"><rect x="259" y="83.5" width="12" height="11.5" fill="#f3f3f3"/><path d="M262,84 q1,5 4,7 v4 M266,91 q2,-3 5,-3"/><circle cx="256.2" cy="93.6" r="5" fill="#f8f8f8"/><path d="M259.8,97.2 l5.2,5.2 M253.7,93.6 h5 M256.2,91.1 v5"/></g><path d="M224.3,110.0 L231.5,117.2 M224.3,117.2 H231.5 V110.0" fill="none" stroke="#666" stroke-width="1.7" stroke-linecap="butt"/><path d="M243.79999999999998,110.0 L236.6,117.2 M243.79999999999998,117.2 H236.6 V110.0" fill="none" stroke="#666" stroke-width="1.7" stroke-linecap="butt"/><path d="M224.3,129.79999999999998 L231.5,122.6 M224.3,122.6 H231.5 V129.79999999999998" fill="none" stroke="#666" stroke-width="1.7" stroke-linecap="butt"/><path d="M243.79999999999998,129.79999999999998 L236.6,122.6 M243.79999999999998,122.6 H236.6 V129.79999999999998" fill="none" stroke="#666" stroke-width="1.7" stroke-linecap="butt"/><path d="M258.8,117.60000000000001 L251.6,110.4 M258.8,110.4 H251.6 V117.60000000000001" fill="none" stroke="#666" stroke-width="1.7" stroke-linecap="butt"/><path d="M263.40000000000003,117.60000000000001 L270.6,110.4 M263.40000000000003,110.4 H270.6 V117.60000000000001" fill="none" stroke="#666" stroke-width="1.7" stroke-linecap="butt"/><path d="M258.8,122.2 L251.6,129.4 M258.8,129.4 H251.6 V122.2" fill="none" stroke="#666" stroke-width="1.7" stroke-linecap="butt"/><path d="M263.40000000000003,122.2 L270.6,129.4 M263.40000000000003,129.4 H270.6 V122.2" fill="none" stroke="#666" stroke-width="1.7" stroke-linecap="butt"/><path d="M227,149 h16.8 M231.8,142 L225,149 L231.8,156" fill="none" stroke="#4fa3dc" stroke-width="2.8"/><path d="M251.2,149 h17 M263.5,142 L270.3,149 L263.5,156" fill="none" stroke="#d0d0d0" stroke-width="2.8"/><g><path d="M297,118 V87 Q306,82 316,87 Q326,82 335,87 V118 Q326,114 316,117 Q306,114 297,118z" fill="#fff" stroke="#6e6e6e" stroke-width="1.4"/><path d="M316,87 V117" stroke="#6e6e6e" stroke-width="1.3"/><path d="M297,118 Q306,114 316,117 Q326,114 335,118" fill="none" stroke="#4a9fdc" stroke-width="1.6"/><path d="M322,84 h5 v15 l-2.5,-2.5 l-2.5,2.5z" fill="#4a9fdc"/></g><polygon points="312.5,149.5 319.5,149.5 316,153.5" fill="#444"/><g stroke="#777" stroke-width="1.3"><path d="M381,81 V87.5 M381,114 V121 M361,100.7 H367.5 M394.5,100.7 H401"/></g><circle cx="381" cy="100.7" r="10" fill="#d8ecf9" stroke="#4a9fdc" stroke-width="1.4"/><circle cx="381" cy="100.7" r="1.5" fill="#333"/><path d="M394.6,180.5 V173.6 H401.5" fill="none" stroke="#707070" stroke-width="1.1"/><path d="M397,176 L401.5,180.5" stroke="#707070" stroke-width="1.2"/><polygon points="403,182 403,177 398,182" fill="#707070"/><g stroke="#707070" stroke-width="1.2"><rect x="431.5" y="81.5" width="17" height="17" fill="#f1df8a"/><rect x="453.5" y="81.5" width="17" height="17" fill="#8fbf8c"/><rect x="431.5" y="103.5" width="17" height="17" fill="#d2b38e"/><rect x="453.5" y="103.5" width="17" height="17" fill="#8fbf8c"/></g><path d="M432,92 q6,-6 10,-2 q4,3 6,-3 M438,82 q3,8 8,16" stroke="#c0704a" stroke-width="0.8" fill="none"/><path d="M462,82 q-2,6 -6,8 q-2,4 -2,8 h6 q4,-4 10,-6 v-10z" fill="#d7ecf8"/><path d="M432,104 h4 q2,4 0,8 l-4,2z" fill="#d7ecf8"/><path d="M436,104 h12 v3 q-6,2 -8,8 l-4,5z" fill="#d7ecf8" opacity="0"/><path d="M454,104 h5 q3,4 -1,8 q4,3 10,1 v-9z" fill="#f2b98a"/><path d="M458,112 q5,2 7,6 h5 v-6 q-4,-3 -8,-2z" fill="#f0dd7a"/><polygon points="448.0,149.5 455.0,149.5 451.5,153.5" fill="#444"/><path d="M491,120 Q496,96 493,87 Q510,84 529,86 Q528,104 532,118 Q512,112 491,120z" fill="#e5d35a"/><path d="M511.5,82 v20 M501,92 h21" stroke="#666" stroke-width="3"/><polygon points="527.0,149.5 534.0,149.5 530.5,153.5" fill="#444"/><g stroke="#707070" stroke-width="1.2"><rect x="545.5" y="81.5" width="17" height="17" fill="#e5d35a"/><rect x="567.5" y="81.5" width="17" height="17" fill="#fff"/><rect x="545.5" y="103.5" width="17" height="17" fill="#fff"/><rect x="567.5" y="103.5" width="17" height="17" fill="#e5d35a"/></g><polygon points="583.0,149.5 590.0,149.5 586.5,153.5" fill="#444"/><g><rect x="623.2" y="81.7" width="23.6" height="23.6" rx="2.5" fill="#fff" stroke="#6e6e6e" stroke-width="1.4"/><path d="M623.9,82.4 H629.25 Q630.0,92.25 635.0,94.75 Q636.25,101.0 638.0,104.6 H623.9z" fill="#a9e1f5"/><path d="M629.25,82.4 Q630.0,92.25 635.0,94.75 Q636.25,101.0 638.0,104.6 M635.0,94.75 Q640.0,88.5 646.1,87.75" fill="none" stroke="#6e6e6e" stroke-width="1.1"/></g><path d="M611,94 L629,108 L621.5,109 L625.5,118 L622,119.5 L618,110.5 L611.5,115z" fill="#fff" stroke="#6e6e6e" stroke-width="1.3"/><polygon points="626.0,149.5 633.0,149.5 629.5,153.5" fill="#444"/><g><rect x="669.7" y="81.7" width="23.6" height="23.6" rx="2.5" fill="#fff" stroke="#6e6e6e" stroke-width="1.4"/><path d="M670.4,82.4 H675.75 Q676.5,92.25 681.5,94.75 Q682.75,101.0 684.5,104.6 H670.4z" fill="#a9e1f5"/><path d="M675.75,82.4 Q676.5,92.25 681.5,94.75 Q682.75,101.0 684.5,104.6 M681.5,94.75 Q686.5,88.5 692.6,87.75" fill="none" stroke="#6e6e6e" stroke-width="1.1"/></g><g><rect x="684.5" y="97.5" width="23" height="23" rx="1" fill="#fff" stroke="#6e6e6e" stroke-width="1.3"/><rect x="685.5" y="98.5" width="21" height="4" fill="#6bb0e0"/><path d="M685,107 h22 M685,111.5 h22 M685,116 h22 M692,102.5 v18 M698.5,102.5 v18" stroke="#6e6e6e" stroke-width="1"/></g><g><rect x="739.7" y="81.7" width="23.6" height="23.6" rx="2.5" fill="#fff" stroke="#6e6e6e" stroke-width="1.4"/><path d="M740.4,82.4 H745.75 Q746.5,92.25 751.5,94.75 Q752.75,101.0 754.5,104.6 H740.4z" fill="#a9e1f5"/><path d="M745.75,82.4 Q746.5,92.25 751.5,94.75 Q752.75,101.0 754.5,104.6 M751.5,94.75 Q756.5,88.5 762.6,87.75" fill="none" stroke="#6e6e6e" stroke-width="1.1"/></g><g><rect x="754.7" y="96.7" width="23.6" height="23.6" rx="2.5" fill="#fff" stroke="#6e6e6e" stroke-width="1.4"/><path d="M755.5,97.5 H767 Q771,104 768,110 Q764,114 755.5,114z" fill="#a9e1f5"/><path d="M767,97.5 Q771,104 768,110 Q764,114 755.5,114 M768,110 Q772,114 770,120" fill="none" stroke="#6e6e6e" stroke-width="1.1"/></g><g><rect x="796.5" y="84.5" width="19" height="16" rx="1" fill="#fff" stroke="#555" stroke-width="1.3"/><rect x="797.2" y="85.2" width="17.6" height="2.8" fill="#6bb0e0"/><path d="M799,90.5 h6 M807,90.5 h6 M799,93.5 h6 M807,93.5 h6 M799,96.5 h6 M807,96.5 h6" stroke="#777" stroke-width="1.4"/></g><g><rect x="796.5" y="110.5" width="19" height="19" rx="1.5" fill="#f4f4f4" stroke="#cacaca" stroke-width="1.3"/><path d="M801,111 Q802,117 806,120 Q808,124 807,129 M806,120 Q810,117 815,116" fill="none" stroke="#cacaca" stroke-width="1"/></g><path d="M880.6,180.5 V173.6 H887.5" fill="none" stroke="#707070" stroke-width="1.1"/><path d="M883,176 L887.5,180.5" stroke="#707070" stroke-width="1.2"/><polygon points="889,182 889,177 884,182" fill="#707070"/><path d="M955,94.5 L948,84 A13.5,13.5 0 0 1 964,87z" fill="#6bb4e0"/><path d="M955,94.5 L964.5,87 A13.5,13.5 0 0 1 967.5,100z" fill="#cf6d47"/><path d="M955,94.5 L967.5,100.5 A13.5,13.5 0 0 1 963,105z" fill="#e8d25a"/><path d="M955,94.5 L962.5,105.5 A13.5,13.5 0 0 1 944.5,86z" fill="#eca65a"/><circle cx="937" cy="94.5" r="4.3" fill="#d6ebf8" stroke="#4a9fdc" stroke-width="1.3"/><path d="M929,121 v-11 q0,-6 5,-6 h6 q5,0 5,6 v11z" fill="#d6ebf8" stroke="#4a9fdc" stroke-width="1.3"/><path d="M932.5,111 v10 M941.5,111 v10" stroke="#4a9fdc" stroke-width="1"/><polygon points="943.3,149.5 950.3,149.5 946.8,153.5" fill="#444"/><rect x="1005.5" y="92.5" width="39" height="11" fill="#f7f7f7" stroke="#c09060" stroke-width="1.3"/><path d="M1008,103 v-4 M1011,103 v-3 M1014,103 v-6 M1017,103 v-3 M1020,103 v-4 M1023,103 v-3 M1026,103 v-6 M1029,103 v-3 M1032,103 v-4 M1035,103 v-3 M1038,103 v-6 M1041,103 v-3" stroke="#c09060" stroke-width="1"/><path d="M1005.5,105.5 v4.5 M1044.5,105.5 v4.5 M1007,107.8 h36" stroke="#4a9fdc" stroke-width="1.2"/><polygon points="1022.0,149.5 1029.0,149.5 1025.5,153.5" fill="#444"/><g fill="#e0e0e0" stroke="#6e6e6e" stroke-width="1.2"><rect x="1072.5" y="81.5" width="9" height="10"/><rect x="1087.5" y="81.5" width="9" height="10"/><path d="M1067,91.5 h15 v17 h-2 l2,12 h-18 l2,-13z"/><path d="M1087,91.5 h15 l2,16 l2,13 h-18 l2,-12 h-3z"/><rect x="1081.5" y="94.5" width="6" height="13" fill="#bdbdbd"/></g><polygon points="1080.8,149.5 1087.8,149.5 1084.3,153.5" fill="#444"/><path d="M1127,92 L1135,84 L1142,90 L1142,97 L1133,100 L1127,97z" fill="#f2e3a8" stroke="#c0a06a" stroke-width="1.1"/><circle cx="1131" cy="95" r="1.8" fill="#fff" stroke="#777" stroke-width="0.9"/><path d="M1131,96 q-2,4 -4,6" stroke="#777" stroke-width="0.9" fill="none"/><rect x="1137.5" y="93" width="2.6" height="10" fill="#666"/><rect x="1142" y="93" width="2.6" height="10" fill="#666"/><path d="M1198,92 L1206,84 L1213,90 L1213,97 L1204,100 L1198,97z" fill="#f2e3a8" stroke="#c0a06a" stroke-width="1.1"/><circle cx="1202" cy="95" r="1.8" fill="#fff" stroke="#777" stroke-width="0.9"/><path d="M1202,96 q-2,4 -4,6" stroke="#777" stroke-width="0.9" fill="none"/><rect x="1206" y="95" width="10" height="8" rx="1" fill="#e9a04c"/><path d="M1208,95 v-2.5 a3,3 0 0 1 6,0 v2.5" fill="none" stroke="#e9a04c" stroke-width="1.3"/><rect x="1210.5" y="98" width="1.2" height="2.5" fill="#fff"/><path d="M1127,119 L1135,111 L1142,117 L1142,124 L1133,127 L1127,124z" fill="#f2e3a8" stroke="#c0a06a" stroke-width="1.1"/><circle cx="1131" cy="122" r="1.8" fill="#fff" stroke="#777" stroke-width="0.9"/><path d="M1131,123 q-2,4 -4,6" stroke="#777" stroke-width="0.9" fill="none"/><path d="M1136,120 L1145,129 M1145,120 L1136,129" stroke="#d2512a" stroke-width="2.2"/><path d="M1127,148 L1135,140 L1142,146 L1142,153 L1133,156 L1127,153z" fill="#f2e3a8" stroke="#c0a06a" stroke-width="1.1"/><circle cx="1131" cy="151" r="1.8" fill="#fff" stroke="#777" stroke-width="0.9"/><path d="M1131,152 q-2,4 -4,6" stroke="#777" stroke-width="0.9" fill="none"/><rect x="1133.5" y="149.5" width="11" height="9" fill="#f4f4f4" stroke="#777" stroke-width="1.1"/><path d="M1136,152.5 h6 M1136,155.5 h6" stroke="#6a6aaa" stroke-width="1"/><polygon points="1190.0,147.25 1196.0,147.25 1193,150.75" fill="#555"/><path d="M1284,82 h23 l8,8 v4 l-7,7 h-24z" fill="#f4e6b4" stroke="#c09060" stroke-width="1.3"/><path d="M1288,87 h14 M1288,91 h14 M1288,95 h10" stroke="#d9b98a" stroke-width="1"/><circle cx="1307.5" cy="91" r="2.3" fill="#fff" stroke="#777" stroke-width="1"/><path d="M1309,92 q5,0 7,4" fill="none" stroke="#777" stroke-width="1"/><path d="M1282,104 h8 l6,-8 v8 h4 a2.5,2.5 0 0 1 2.5,2.5 v11.5 a2.5,2.5 0 0 1 -2.5,2.5 h-18 a2.5,2.5 0 0 1 -2.5,-2.5 v-11.5 a2.5,2.5 0 0 1 2.5,-2.5z" fill="#fff" stroke="#777" stroke-width="1.2"/><text x="1291" y="118" font-size="11" text-anchor="middle" fill="#666" font-family="Liberation Sans">A</text><path d="M1328.6,180.5 V173.6 H1335.5" fill="none" stroke="#707070" stroke-width="1.1"/><path d="M1331,176 L1335.5,180.5" stroke="#707070" stroke-width="1.2"/><polygon points="1337,182 1337,177 1332,182" fill="#707070"/><rect x="1370.5" y="82.5" width="37" height="37" fill="#9cc49a" stroke="#707070" stroke-width="1.4"/><path d="M1391,83.5 h15.5 v35 h-18 q-4,-4 -1,-8 q-5,-5 0,-10 q-3,-5 2,-9 q-2,-4 1,-8z" fill="#d6ebf8"/><path d="M1369,90.5 h21 M1375.5,86 v9 M1381.5,86 v9" stroke="#666" stroke-width="1.6"/><path d="M1400.5,100.5 v15 M1394,109 l6.5,7 l6.5,-7" fill="none" stroke="#eea248" stroke-width="3.2"/><polygon points="1402.5,149.5 1409.5,149.5 1406,153.5" fill="#444"/><g stroke="#d0d0d0" stroke-width="1.2" fill="#ececec"><rect x="1432.5" y="83.5" width="18" height="18"/><rect x="1432.5" y="110.5" width="18" height="18"/></g><path d="M1431,88 h10 M1431,115 h10" stroke="#c8c8c8" stroke-width="1.3"/><path d="M1441,126 l8,-8 M1449,126 l-8,-8" stroke="#c8c8c8" stroke-width="1.5"/><path d="M1505.6,180.5 V173.6 H1512.5" fill="none" stroke="#707070" stroke-width="1.1"/><path d="M1508,176 L1512.5,180.5" stroke="#707070" stroke-width="1.2"/><polygon points="1514,182 1514,177 1509,182" fill="#707070"/><polygon points="309.0,214.0 318.0,214.0 313.5,219.0" fill="#555"/><path d="M330,208.5 h8 M331.5,208.5 v7.5 h5 v-7.5 M329.5,216 h9 M334,216 v4.5" fill="none" stroke="#555" stroke-width="1.3"/><path d="M348.5,209 L359,219.5 M359,209 L348.5,219.5" stroke="#555" stroke-width="1.6"/><path d="M13.6,249.5 h16.4 v3 l-6.5,6.5 v11 h-3.4 v-11 l-6.5,-6.5z" fill="#8a8a8a" stroke="#6a6a6a" stroke-width="0.8"/><circle cx="331.7" cy="259" r="4.2" fill="none" stroke="#444" stroke-width="1.5"/><path d="M328.8,262 L323.8,267" stroke="#444" stroke-width="1.8"/><polygon points="347.95,258.6 354.45,258.6 351.2,262.4" fill="#b5b5b5"/><g fill="#e5d35a"><polygon points="34,287 44,287 45,294 33,294"/><rect x="33" y="295" width="12" height="2.6"/><polygon points="52,299 62,299 63,305.8 51,305.8"/><polygon points="52,310 62,310 63,317 51,317"/></g><path d="M39,297.6 V313.5 H51 M39,302.5 H51" fill="none" stroke="#777" stroke-width="1.1"/><path d="M73.5,293 v18 a14.5,5 0 0 0 29,0 v-18" fill="#f0f0f0" stroke="#666" stroke-width="1.2"/><path d="M93,297.5 v19 q7,-1 9.5,-5.5 v-18 q-3,4 -9.5,4.5z" fill="#dcdcdc"/><ellipse cx="88" cy="293" rx="14.5" ry="5" fill="#f4f4f4" stroke="#666" stroke-width="1.2"/><g><rect x="113.7" y="287.7" width="28.6" height="28.6" rx="2.5" fill="#fff" stroke="#6e6e6e" stroke-width="1.4"/><path d="M114.4,288.4 H121.1 Q122.0,300.5 128.0,303.5 Q129.5,311.0 131.6,315.6 H114.4z" fill="#a9e1f5"/><path d="M121.1,288.4 Q122.0,300.5 128.0,303.5 Q129.5,311.0 131.6,315.6 M128.0,303.5 Q134.0,296.0 141.6,295.1" fill="none" stroke="#6e6e6e" stroke-width="1.1"/></g><path d="M155,315.5 L178,292.5 L181.5,296 L158.5,319z" fill="#d9c54a" transform="translate(0,-2)"/><path d="M176.5,290 L180.5,286.2 L184,289.7 L180,293.5z" fill="#e8a08a"/><path d="M175.5,291 L178.5,288 L182,291.5 L179,294.5z" fill="#555"/><path d="M153,317 L155,313 L157,315z" fill="#555"/><g stroke="#8a8a8a" stroke-width="1.3" fill="none"><rect x="193.5" y="287.5" width="21" height="21"/><path d="M204,287.5 v21 M193.5,298 h21"/></g><rect x="204" y="299" width="14" height="14" fill="#f5f6f6" opacity="0"/><path d="M214.5,301.5 v14 M207.5,308.5 h14" stroke="#6bb8ea" stroke-width="3"/><path d="M214.5,302 v13 M208,308.5 h13" stroke="#666" stroke-width="1.2"/><path d="M235,302 L249.5,287.5 L262.5,300.5 L248,315 L238,315 q-3,0 -3,-3z" fill="#f0df8a" stroke="#b58a4a" stroke-width="1.1"/><path d="M243,303 l7,-7 M245.5,305.5 l7,-7 M248,308 l7,-7" stroke="#d7a88a" stroke-width="0.8"/><circle cx="241.5" cy="308" r="2.4" fill="#fff" stroke="#b58a4a" stroke-width="1"/><path d="M241,309 l-4,6 l-2,-1" stroke="#666" stroke-width="0.9" fill="none"/><path d="M273.5,316.5 L281.5,299 L294.5,299 L302.5,316.5z" fill="#dff0e0"/><path d="M276,316 L282,302 L287,302 L287,316z" fill="#5aa7de"/><path d="M287,316 L287,307 L296,307 L299,316z" fill="#cfe6f6"/><path d="M273,317 h30" stroke="#666" stroke-width="1.3"/><path d="M273.5,316.5 L282,298" stroke="#666" stroke-width="1.1"/><g transform="rotate(45 290 300)"><rect x="287" y="289" width="6" height="8" fill="#fff" stroke="#444" stroke-width="1.2"/><rect x="286.5" y="297" width="7" height="6" fill="#555"/><rect x="287" y="303" width="6" height="8" fill="#fff" stroke="#444" stroke-width="1.2"/></g><polygon points="19.3,385 19.3,392.2 11.3,392.2" fill="#5a5a5a"/><polygon points="33,415 33,422.2 25,422.2" fill="#5a5a5a"/><polygon points="33,475.5 33,482.7 25,482.7" fill="#5a5a5a"/><polygon points="33,535.5 33,542.7 25,542.7" fill="#5a5a5a"/><g transform="translate(25.9,378.8) scale(1.0)"><rect x="0.5" y="0.5" width="19" height="19" fill="#eef4ec" stroke="#6f6258" stroke-width="1.1"/><rect x="2" y="2" width="16" height="16" fill="#9cc49a"/><path d="M12,2 H18 V12 Q16,11 13,12 Q11,14 11,18 H6 Q6,16 4,15 Q5,12 7,11 Q8,9 9,8 Q10,6 12,2z" fill="#d6ebf8"/><path d="M11.5,18 Q12,13 15,12.5 Q17.5,13 18,15 V18z" fill="#9cc49a"/></g><path d="M44.0,479.5 L47.5,484 L54.5,474.5" fill="none" stroke="#555" stroke-width="1.5"/><path d="M44.0,599.5 L47.5,604 L54.5,594.5" fill="none" stroke="#555" stroke-width="1.5"/><g transform="translate(383.3,200) scale(0.975)"><rect x="0.5" y="0.5" width="19" height="19" fill="#eef4ec" stroke="#6f6258" stroke-width="1.1"/><rect x="2" y="2" width="16" height="16" fill="#9cc49a"/><path d="M12,2 H18 V12 Q16,11 13,12 Q11,14 11,18 H6 Q6,16 4,15 Q5,12 7,11 Q8,9 9,8 Q10,6 12,2z" fill="#d6ebf8"/><path d="M11.5,18 Q12,13 15,12.5 Q17.5,13 18,15 V18z" fill="#9cc49a"/></g><path d="M515.5,205.5 L525.5,215.5 M525.5,205.5 L515.5,215.5" stroke="#fff" stroke-width="1.6"/><g transform="translate(541,200) scale(0.975)"><rect x="0.5" y="0.5" width="19" height="19" fill="#eef4ec" stroke="#6f6258" stroke-width="1.1"/><rect x="2" y="2" width="16" height="16" fill="#9cc49a"/><path d="M12,2 H18 V12 Q16,11 13,12 Q11,14 11,18 H6 Q6,16 4,15 Q5,12 7,11 Q8,9 9,8 Q10,6 12,2z" fill="#d6ebf8"/><path d="M11.5,18 Q12,13 15,12.5 Q17.5,13 18,15 V18z" fill="#9cc49a"/></g><g><path d="M709.5,200.5 h14 l5.5,5.5 v13.5 h-19.5z" fill="#fff" stroke="#707070" stroke-width="1"/><path d="M723.5,200.5 v5.5 h5.5" fill="none" stroke="#707070" stroke-width="1"/><rect x="711.5" y="204" width="15.5" height="10" fill="#5aa7de"/><path d="M714,211 q3,-4 6,-3 q2,-2 5,-3" stroke="#fff" stroke-width="1.6" fill="none"/><path d="M712,216.8 h6 M712,218.3 h4" stroke="#8a8a8a" stroke-width="1"/><polygon points="723,218.5 725,215.5 727,218.5" fill="#5aa7de"/></g><polygon points="1478.5,210.0 1487.5,210.0 1483,215.0" fill="#777"/><polygon points="494.75,1051.6 501.25,1051.6 498,1055.4" fill="#555"/><g stroke="#6e6e6e" stroke-width="1.4" fill="none"><rect x="522.5" y="1044.5" width="13" height="13"/><path d="M529,1044.5 v13 M522.5,1051 h13"/></g><path d="M536.5,1054 v10 M531.5,1059 h10" stroke="#555" stroke-width="1.3"/><g stroke="#6e6e6e" stroke-width="1.2" fill="none"><rect x="550" y="1046" width="5" height="2.5"/><path d="M565,1044 v6 M562,1047 h6"/><rect x="564" y="1055" width="5.5" height="3"/></g><path d="M551,1064 L567,1050" stroke="#4a9fdc" stroke-width="1.2" stroke-dasharray="2,1.5"/><path d="M553,1064 h17 v-5z" fill="#cfe6f6"/><rect x="550" y="1061" width="3.5" height="3.5" fill="#4a9a4a"/><g stroke="#8a8a8a" stroke-width="1.3" fill="none"><rect x="578.5" y="1044.5" width="19" height="19"/><path d="M583.3,1044.5 v19 M588,1044.5 v19 M592.8,1044.5 v19 M578.5,1049.3 h19 M578.5,1054 h19 M578.5,1058.8 h19"/></g><text x="606" y="1060" font-size="11" font-weight="bold" fill="#4a9fdc" font-family="Liberation Sans">N</text><path d="M616,1044 v20 l9,-9" fill="none" stroke="#555" stroke-width="1.2"/><path d="M621,1045 q3,2 2,6 M620,1049 l3,2.5 l2.5,-3" fill="none" stroke="#4a9fdc" stroke-width="1.3"/><polygon points="1853.0,214.0 1862.0,214.0 1857.5,219.0" fill="#555"/><path d="M1873.5,208.5 h8 M1875,208.5 v7.5 h5 v-7.5 M1873,216 h9 M1877.5,216 v4.5" fill="none" stroke="#555" stroke-width="1.3"/><path d="M1892,209 L1902.5,219.5 M1902.5,209 L1892,219.5" stroke="#555" stroke-width="1.6"/><path d="M1523.5,289 A10,10 0 1 1 1524,301" fill="none" stroke="#666" stroke-width="1.4"/><polygon points="1521,284.5 1526.5,290 1520.5,291.5" fill="#666"/><path d="M1531.5,288 v6.5 l4,3.5" fill="none" stroke="#666" stroke-width="1.2"/><path d="M1520.5,301 L1531,313.5" stroke="#d9b88a" stroke-width="2.4"/><path d="M1511.5,300 l6,-5 q3,-1.5 6,0 l-2,3 l1.5,2 l-3,2.5 l-2,-1.5 l-5,2.5z" fill="#666"/><g><rect x="1552.5" y="285.5" width="29" height="8" fill="#eeab94" stroke="#d0704f" stroke-width="1"/><path d="M1557.5,284 v3 M1575.5,284 v3" stroke="#fff" stroke-width="1.2"/><rect x="1552.5" y="295.5" width="29" height="18.5" fill="#fff" stroke="#8a8a8a" stroke-width="1.2"/><path d="M1552.5,301.7 h29 M1552.5,307.9 h29 M1558.3,295.5 v18.5 M1564.1,295.5 v18.5 M1569.9,295.5 v18.5 M1575.7,295.5 v18.5" stroke="#8a8a8a" stroke-width="1.2"/></g><circle cx="1873" cy="356" r="4.2" fill="none" stroke="#444" stroke-width="1.5"/><path d="M1870,359 L1865.2,364" stroke="#444" stroke-width="1.8"/><polygon points="1889.25,355.6 1895.75,355.6 1892.5,359.4" fill="#b5b5b5"/><path d="M1512.5,387.5 h16.5 v2.5 l-6.5,6 v10 h-3.5 v-10 l-6.5,-6z" fill="#777" stroke="#666" stroke-width="0.7"/><polygon points="1536.0,394.5 1543.0,394.5 1539.5,398.5" fill="#555"/><path d="M1568.7,389 V396.5 M1564,393 L1568.7,388.3 L1573.4,393" fill="none" stroke="#4a8a4a" stroke-width="2"/><path d="M1568.7,396.5 V405 M1564,400.5 L1568.7,405.2 L1573.4,400.5" fill="none" stroke="#eea248" stroke-width="2"/><polygon points="1581.5,394.5 1588.5,394.5 1585,398.5" fill="#555"/><path d="M1611,387 L1630,406 M1630,387 L1611,406" stroke="#cf6a45" stroke-width="2.8"/><path d="M1519.5,442.5 L1525.5,449 L1537,434.5" fill="none" stroke="#5aaa5a" stroke-width="3"/><g style="z-index:20"><path d="M1449,446 h-6.5 v13 h13 v-5" fill="none" stroke="#555" stroke-width="1.4"/><path d="M1446.5,453.5 q1,-6 8,-6 M1452,444.5 l3.5,3 l-3.5,3" fill="none" stroke="#555" stroke-width="1.8"/></g><path d="M1471,446 L1483,458 M1483,446 L1471,458" stroke="#555" stroke-width="1.7"/><circle cx="1018" cy="484" r="10.2" fill="#6aa86a"/><path d="M1012.5,484.5 L1016.5,488.5 L1024,480.5" fill="none" stroke="#fff" stroke-width="2.6"/><path d="M1002.5,603.5 L1007.0,608.0 L1002.5,612.5" fill="none" stroke="#444" stroke-width="1.6"/><path d="M1002,635 L1006.5,639.5 L1011,635" fill="none" stroke="#444" stroke-width="1.6"/><path d="M1002.5,825 L1007.0,829.5 L1002.5,834" fill="none" stroke="#444" stroke-width="1.6"/><path d="M1002,854.5 L1006.5,859.0 L1011,854.5" fill="none" stroke="#444" stroke-width="1.6"/><polygon points="1487,588 1482.5,595 1491.5,595" fill="#8a8a8a"/><polygon points="1487,1060 1482.5,1052 1491.5,1052" fill="#8a8a8a"/></svg>
</body></html>
